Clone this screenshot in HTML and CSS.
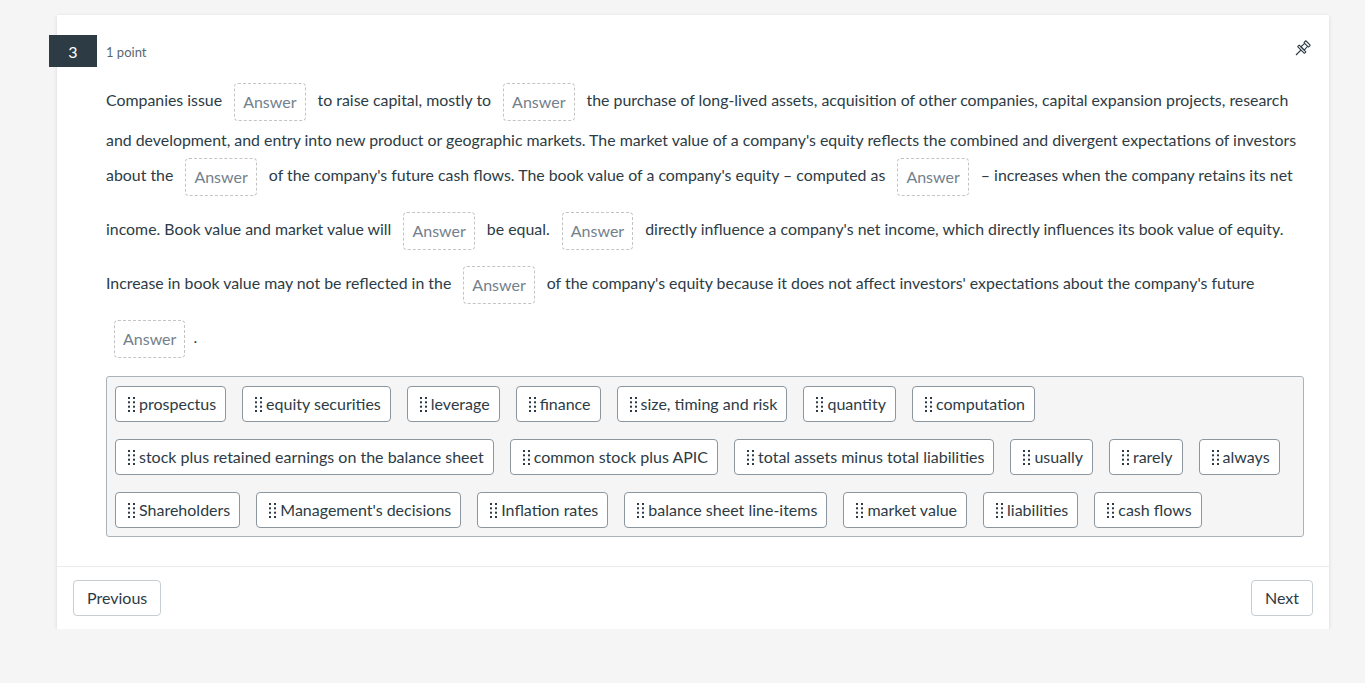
FILE: index.html
```html
<!DOCTYPE html>
<html lang="en">
<head>
<meta charset="utf-8">
<link rel="stylesheet" href="styles.css">
</head>
<body>
<div class="card">
  <div class="card-body">
    <div class="q-header">
      <div class="q-num">3</div>
      <div class="q-points">1 point</div>
      <svg class="pin" width="20" height="20" viewBox="0 0 20 20" fill="none" stroke="#2d3b45" stroke-width="1.1" stroke-linejoin="round">
        <g transform="rotate(45 10 10)">
          <rect x="6.8" y="1.5" width="6.4" height="2.6" rx="0.4"/>
          <path d="M8 4.1 L7.6 9.2 L12.4 9.2 L12 4.1"/>
          <rect x="5.2" y="9.2" width="9.6" height="2.2" rx="0.4"/>
          <path d="M10 11.4 V18.5"/>
        </g>
      </svg>
    </div>
    <p class="q-text">Companies issue <span class="drop">Answer</span> to raise capital, mostly to <span class="drop">Answer</span> the purchase of long-lived assets, acquisition of other companies, capital expansion projects, research and development, and entry into new product or geographic markets. The market value of a company's equity reflects the combined and divergent expectations of investors about the <span class="drop">Answer</span> of the company's future cash flows. The book value of a company's equity – computed as <span class="drop">Answer</span> – increases when the company retains its net income. Book value and market value will <span class="drop">Answer</span> be equal. <span class="drop">Answer</span> directly influence a company's net income, which directly influences its book value of equity. Increase in book value may not be reflected in the <span class="drop">Answer</span> of the company's equity because it does not affect investors' expectations about the company's future <span class="drop">Answer</span>.</p>
    <div class="pool">
      <span class="chip"><svg class="grip" width="7" height="15" viewBox="0 0 7 15"><g fill="#2d3b45"><rect x="0" y="0" width="2" height="2"/><rect x="5" y="0" width="2" height="2"/><rect x="0" y="4.3" width="2" height="2"/><rect x="5" y="4.3" width="2" height="2"/><rect x="0" y="8.7" width="2" height="2"/><rect x="5" y="8.7" width="2" height="2"/><rect x="0" y="13" width="2" height="2"/><rect x="5" y="13" width="2" height="2"/></g></svg>prospectus</span>
      <span class="chip"><svg class="grip" width="7" height="15" viewBox="0 0 7 15"><g fill="#2d3b45"><rect x="0" y="0" width="2" height="2"/><rect x="5" y="0" width="2" height="2"/><rect x="0" y="4.3" width="2" height="2"/><rect x="5" y="4.3" width="2" height="2"/><rect x="0" y="8.7" width="2" height="2"/><rect x="5" y="8.7" width="2" height="2"/><rect x="0" y="13" width="2" height="2"/><rect x="5" y="13" width="2" height="2"/></g></svg>equity securities</span>
      <span class="chip"><svg class="grip" width="7" height="15" viewBox="0 0 7 15"><g fill="#2d3b45"><rect x="0" y="0" width="2" height="2"/><rect x="5" y="0" width="2" height="2"/><rect x="0" y="4.3" width="2" height="2"/><rect x="5" y="4.3" width="2" height="2"/><rect x="0" y="8.7" width="2" height="2"/><rect x="5" y="8.7" width="2" height="2"/><rect x="0" y="13" width="2" height="2"/><rect x="5" y="13" width="2" height="2"/></g></svg>leverage</span>
      <span class="chip"><svg class="grip" width="7" height="15" viewBox="0 0 7 15"><g fill="#2d3b45"><rect x="0" y="0" width="2" height="2"/><rect x="5" y="0" width="2" height="2"/><rect x="0" y="4.3" width="2" height="2"/><rect x="5" y="4.3" width="2" height="2"/><rect x="0" y="8.7" width="2" height="2"/><rect x="5" y="8.7" width="2" height="2"/><rect x="0" y="13" width="2" height="2"/><rect x="5" y="13" width="2" height="2"/></g></svg>finance</span>
      <span class="chip"><svg class="grip" width="7" height="15" viewBox="0 0 7 15"><g fill="#2d3b45"><rect x="0" y="0" width="2" height="2"/><rect x="5" y="0" width="2" height="2"/><rect x="0" y="4.3" width="2" height="2"/><rect x="5" y="4.3" width="2" height="2"/><rect x="0" y="8.7" width="2" height="2"/><rect x="5" y="8.7" width="2" height="2"/><rect x="0" y="13" width="2" height="2"/><rect x="5" y="13" width="2" height="2"/></g></svg>size, timing and risk</span>
      <span class="chip"><svg class="grip" width="7" height="15" viewBox="0 0 7 15"><g fill="#2d3b45"><rect x="0" y="0" width="2" height="2"/><rect x="5" y="0" width="2" height="2"/><rect x="0" y="4.3" width="2" height="2"/><rect x="5" y="4.3" width="2" height="2"/><rect x="0" y="8.7" width="2" height="2"/><rect x="5" y="8.7" width="2" height="2"/><rect x="0" y="13" width="2" height="2"/><rect x="5" y="13" width="2" height="2"/></g></svg>quantity</span>
      <span class="chip"><svg class="grip" width="7" height="15" viewBox="0 0 7 15"><g fill="#2d3b45"><rect x="0" y="0" width="2" height="2"/><rect x="5" y="0" width="2" height="2"/><rect x="0" y="4.3" width="2" height="2"/><rect x="5" y="4.3" width="2" height="2"/><rect x="0" y="8.7" width="2" height="2"/><rect x="5" y="8.7" width="2" height="2"/><rect x="0" y="13" width="2" height="2"/><rect x="5" y="13" width="2" height="2"/></g></svg>computation</span>
      <span class="chip"><svg class="grip" width="7" height="15" viewBox="0 0 7 15"><g fill="#2d3b45"><rect x="0" y="0" width="2" height="2"/><rect x="5" y="0" width="2" height="2"/><rect x="0" y="4.3" width="2" height="2"/><rect x="5" y="4.3" width="2" height="2"/><rect x="0" y="8.7" width="2" height="2"/><rect x="5" y="8.7" width="2" height="2"/><rect x="0" y="13" width="2" height="2"/><rect x="5" y="13" width="2" height="2"/></g></svg>stock plus retained earnings on the balance sheet</span>
      <span class="chip"><svg class="grip" width="7" height="15" viewBox="0 0 7 15"><g fill="#2d3b45"><rect x="0" y="0" width="2" height="2"/><rect x="5" y="0" width="2" height="2"/><rect x="0" y="4.3" width="2" height="2"/><rect x="5" y="4.3" width="2" height="2"/><rect x="0" y="8.7" width="2" height="2"/><rect x="5" y="8.7" width="2" height="2"/><rect x="0" y="13" width="2" height="2"/><rect x="5" y="13" width="2" height="2"/></g></svg>common stock plus APIC</span>
      <span class="chip"><svg class="grip" width="7" height="15" viewBox="0 0 7 15"><g fill="#2d3b45"><rect x="0" y="0" width="2" height="2"/><rect x="5" y="0" width="2" height="2"/><rect x="0" y="4.3" width="2" height="2"/><rect x="5" y="4.3" width="2" height="2"/><rect x="0" y="8.7" width="2" height="2"/><rect x="5" y="8.7" width="2" height="2"/><rect x="0" y="13" width="2" height="2"/><rect x="5" y="13" width="2" height="2"/></g></svg>total assets minus total liabilities</span>
      <span class="chip"><svg class="grip" width="7" height="15" viewBox="0 0 7 15"><g fill="#2d3b45"><rect x="0" y="0" width="2" height="2"/><rect x="5" y="0" width="2" height="2"/><rect x="0" y="4.3" width="2" height="2"/><rect x="5" y="4.3" width="2" height="2"/><rect x="0" y="8.7" width="2" height="2"/><rect x="5" y="8.7" width="2" height="2"/><rect x="0" y="13" width="2" height="2"/><rect x="5" y="13" width="2" height="2"/></g></svg>usually</span>
      <span class="chip"><svg class="grip" width="7" height="15" viewBox="0 0 7 15"><g fill="#2d3b45"><rect x="0" y="0" width="2" height="2"/><rect x="5" y="0" width="2" height="2"/><rect x="0" y="4.3" width="2" height="2"/><rect x="5" y="4.3" width="2" height="2"/><rect x="0" y="8.7" width="2" height="2"/><rect x="5" y="8.7" width="2" height="2"/><rect x="0" y="13" width="2" height="2"/><rect x="5" y="13" width="2" height="2"/></g></svg>rarely</span>
      <span class="chip"><svg class="grip" width="7" height="15" viewBox="0 0 7 15"><g fill="#2d3b45"><rect x="0" y="0" width="2" height="2"/><rect x="5" y="0" width="2" height="2"/><rect x="0" y="4.3" width="2" height="2"/><rect x="5" y="4.3" width="2" height="2"/><rect x="0" y="8.7" width="2" height="2"/><rect x="5" y="8.7" width="2" height="2"/><rect x="0" y="13" width="2" height="2"/><rect x="5" y="13" width="2" height="2"/></g></svg>always</span>
      <span class="chip"><svg class="grip" width="7" height="15" viewBox="0 0 7 15"><g fill="#2d3b45"><rect x="0" y="0" width="2" height="2"/><rect x="5" y="0" width="2" height="2"/><rect x="0" y="4.3" width="2" height="2"/><rect x="5" y="4.3" width="2" height="2"/><rect x="0" y="8.7" width="2" height="2"/><rect x="5" y="8.7" width="2" height="2"/><rect x="0" y="13" width="2" height="2"/><rect x="5" y="13" width="2" height="2"/></g></svg>Shareholders</span>
      <span class="chip"><svg class="grip" width="7" height="15" viewBox="0 0 7 15"><g fill="#2d3b45"><rect x="0" y="0" width="2" height="2"/><rect x="5" y="0" width="2" height="2"/><rect x="0" y="4.3" width="2" height="2"/><rect x="5" y="4.3" width="2" height="2"/><rect x="0" y="8.7" width="2" height="2"/><rect x="5" y="8.7" width="2" height="2"/><rect x="0" y="13" width="2" height="2"/><rect x="5" y="13" width="2" height="2"/></g></svg>Management's decisions</span>
      <span class="chip"><svg class="grip" width="7" height="15" viewBox="0 0 7 15"><g fill="#2d3b45"><rect x="0" y="0" width="2" height="2"/><rect x="5" y="0" width="2" height="2"/><rect x="0" y="4.3" width="2" height="2"/><rect x="5" y="4.3" width="2" height="2"/><rect x="0" y="8.7" width="2" height="2"/><rect x="5" y="8.7" width="2" height="2"/><rect x="0" y="13" width="2" height="2"/><rect x="5" y="13" width="2" height="2"/></g></svg>Inflation rates</span>
      <span class="chip"><svg class="grip" width="7" height="15" viewBox="0 0 7 15"><g fill="#2d3b45"><rect x="0" y="0" width="2" height="2"/><rect x="5" y="0" width="2" height="2"/><rect x="0" y="4.3" width="2" height="2"/><rect x="5" y="4.3" width="2" height="2"/><rect x="0" y="8.7" width="2" height="2"/><rect x="5" y="8.7" width="2" height="2"/><rect x="0" y="13" width="2" height="2"/><rect x="5" y="13" width="2" height="2"/></g></svg>balance sheet line-items</span>
      <span class="chip"><svg class="grip" width="7" height="15" viewBox="0 0 7 15"><g fill="#2d3b45"><rect x="0" y="0" width="2" height="2"/><rect x="5" y="0" width="2" height="2"/><rect x="0" y="4.3" width="2" height="2"/><rect x="5" y="4.3" width="2" height="2"/><rect x="0" y="8.7" width="2" height="2"/><rect x="5" y="8.7" width="2" height="2"/><rect x="0" y="13" width="2" height="2"/><rect x="5" y="13" width="2" height="2"/></g></svg>market value</span>
      <span class="chip"><svg class="grip" width="7" height="15" viewBox="0 0 7 15"><g fill="#2d3b45"><rect x="0" y="0" width="2" height="2"/><rect x="5" y="0" width="2" height="2"/><rect x="0" y="4.3" width="2" height="2"/><rect x="5" y="4.3" width="2" height="2"/><rect x="0" y="8.7" width="2" height="2"/><rect x="5" y="8.7" width="2" height="2"/><rect x="0" y="13" width="2" height="2"/><rect x="5" y="13" width="2" height="2"/></g></svg>liabilities</span>
      <span class="chip"><svg class="grip" width="7" height="15" viewBox="0 0 7 15"><g fill="#2d3b45"><rect x="0" y="0" width="2" height="2"/><rect x="5" y="0" width="2" height="2"/><rect x="0" y="4.3" width="2" height="2"/><rect x="5" y="4.3" width="2" height="2"/><rect x="0" y="8.7" width="2" height="2"/><rect x="5" y="8.7" width="2" height="2"/><rect x="0" y="13" width="2" height="2"/><rect x="5" y="13" width="2" height="2"/></g></svg>cash flows</span>
    </div>
  </div>
  <div class="card-footer">
    <button class="btn">Previous</button>
    <button class="btn">Next</button>
  </div>
</div>
</body>
</html>
```
FILE: styles.css
```css
html, body {
  margin: 0;
  padding: 0;
  background: #f5f5f5;
}
body {
  font-family: Lato, "Liberation Sans", sans-serif;
  color: #2d3b45;
  padding: 15px 36px 0 57px;
}
.card {
  background: #fff;
  box-shadow: 0 1px 4px rgba(0, 0, 0, 0.12);
}
.card-body {
  padding: 20px 25px 29px 49px;
}
.q-header {
  display: flex;
  align-items: center;
  margin-left: -57px;
  height: 32px;
}
.q-num {
  width: 48px;
  height: 32px;
  background: #2d3b45;
  color: #fff;
  font-size: 16px;
  display: flex;
  align-items: center;
  justify-content: center;
}
.q-points {
  margin-left: 9px;
  font-size: 13px;
  color: #5a6770;
  padding-top: 1px;
}
.pin {
  margin-left: auto;
  margin-right: -8px;
  margin-top: -4px;
}
.q-text {
  margin: 8px 0 10px;
  font-size: 15.88px;
  line-height: 21px;
}
.drop {
  display: inline-block;
  vertical-align: middle;
  margin: 8px;
  padding: 7px 8px;
  line-height: 22px;
  font-size: 16px;
  border: 1px dashed #c4c4c4;
  border-radius: 4px;
  color: #73818c;
}
.pool {
  border: 1px solid #aab3b9;
  border-radius: 3px;
  background: #f5f5f5;
  padding: 9px 8px 8px 8px;
  display: flex;
  flex-wrap: wrap;
  row-gap: 17px;
  column-gap: 16px;
}
.chip {
  display: inline-flex;
  align-items: center;
  padding: 6px 9px 6px 12px;
  line-height: 22px;
  font-size: 16px;
  border: 1px solid #8b969e;
  border-radius: 4px;
  background: #fff;
  color: #2d3b45;
}
.grip {
  margin-right: 4px;
}
.card-footer {
  border-top: 1px solid #ebebeb;
  padding: 13px 16px;
  display: flex;
  justify-content: space-between;
}
.btn {
  font-family: Lato, "Liberation Sans", sans-serif;
  font-size: 16px;
  color: #2d3b45;
  background: #fff;
  border: 1px solid #c7cdd1;
  border-radius: 4px;
  padding: 0 13px;
  height: 36px;
  line-height: 34px;
}
```
